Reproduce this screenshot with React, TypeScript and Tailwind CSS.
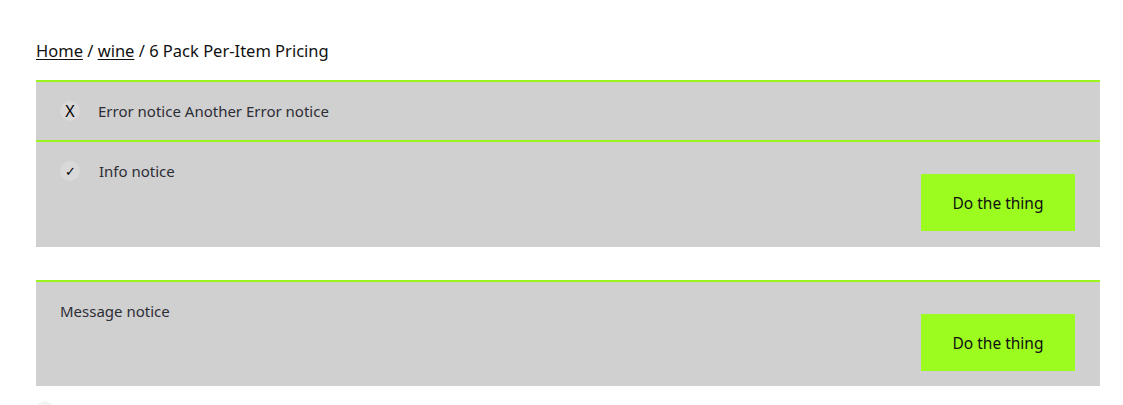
import type { ReactNode } from "react";

const font = { fontFamily: '"Noto Sans", "Open Sans", sans-serif' };

function IconBubble({ children }: { children: ReactNode }) {
  return (
    <span className="w-[20px] h-[20px] -my-px rounded-full bg-[#d9d9d9] flex items-center justify-center text-[16px] text-black shrink-0">
      {children}
    </span>
  );
}

function ActionButton() {
  return (
    <button className="self-end w-[154px] h-[57px] -mt-1.5 bg-[#9cfc1f] text-[15.5px] text-[#111]">
      Do the thing
    </button>
  );
}

export default function App() {
  return (
    <div className="bg-white h-[405px] pl-9 pr-[23px] pt-[40px] overflow-hidden" style={font}>
      <nav className="text-[16.5px] text-[#111] leading-[22px] mb-[18px]">
        <a className="underline underline-offset-2">Home</a> /{" "}
        <a className="underline underline-offset-2">wine</a> / 6 Pack Per-Item Pricing
      </nav>

      <div className="border-t-2 border-[#97f51b] bg-[#d0d0d0] pl-6 pr-[25px] py-5 flex items-center gap-[18px] h-[60px] text-[15px] leading-[18px] text-[#2d2d36]">
        <IconBubble>X</IconBubble>
        <span>Error notice Another Error notice</span>
      </div>

      <div className="border-t-2 border-[#97f51b] bg-[#d0d0d0] pl-6 pr-[25px] pt-5 pb-4 flex flex-col text-[15px] leading-[18px] text-[#2d2d36]">
        <div className="flex items-center gap-[19px] h-[18px]">
          <IconBubble>
            <span className="text-[13px]">✓</span>
          </IconBubble>
          <span>Info notice</span>
        </div>
        <ActionButton />
      </div>

      <div className="h-[33px]" />

      <div className="border-t-2 border-[#97f51b] bg-[#d0d0d0] pl-6 pr-[25px] pt-5 pb-[15px] flex flex-col text-[15px] leading-[18px] text-[#2d2d36]">
        <span className="h-[18px]">Message notice</span>
        <ActionButton />
      </div>

      <div className="mt-[15px] w-[18px] h-[18px] rounded-full bg-[#f3f3f3]" />
    </div>
  );
}
